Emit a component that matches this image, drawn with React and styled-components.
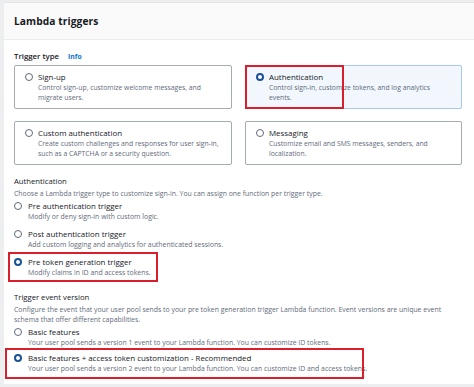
import React from 'react'
import styled, { createGlobalStyle } from 'styled-components'

const Global = createGlobalStyle`
  html, body { margin: 0; padding: 0; background: #eceeef; }
  body { font-family: "Open Sans", "Liberation Sans", sans-serif; color: #16191f; }
`

const Page = styled.div`
  width: 474px;
  height: 387px;
  padding: 2px 0 0 4px;
  box-sizing: border-box;
  overflow: hidden;
`

const Panel = styled.div`
  background: #fff;
  border-top: 1px solid #e3e5e7;
  height: 382px;
  box-sizing: border-box;
`

const Header = styled.div`
  height: 37px;
  display: flex;
  align-items: center;
  padding-left: 10px;
  background: #fafafa;
  border-bottom: 1px solid #eaeded;
  box-sizing: border-box;
`

const Title = styled.h2`
  margin: 0;
  font-size: 10.2px;
  font-weight: 700;
  letter-spacing: 0.1px;
`

const Body = styled.div`
  padding: 11px 12px 0 10px;
`

const FieldLabel = styled.div`
  display: flex;
  align-items: center;
  gap: 9px;
  font-size: 7.8px;
  font-weight: 600;
  line-height: 11px;
`

const Info = styled.span`
  color: #0972d3;
  font-weight: 700;
  font-size: 6.8px;
`

const Tiles = styled.div`
  display: grid;
  grid-template-columns: 218px 217px;
  column-gap: 13px;
  row-gap: 12px;
  margin-top: 2.5px;
`

const Tile = styled.div`
  position: relative;
  height: 44px;
  box-sizing: border-box;
  border: 1px solid ${p => (p.$selected ? '#a9c8e6' : '#a4abb3')};
  background: ${p => (p.$selected ? '#f1f7fd' : '#fff')};
  border-radius: 2px;
  padding: 6px 6px 0 10px;
  display: flex;
  gap: 5px;
`

const Radio = styled.span`
  flex: none;
  width: 8px;
  height: 8px;
  box-sizing: border-box;
  border-radius: 50%;
  margin-top: 1.5px;
  border: ${p => (p.$checked ? '2.3px solid #1a5296' : '1px solid #5f6b7a')};
  background: #fff;
`

const TextCol = styled.div`
  display: flex;
  flex-direction: column;
`

const TileText = styled(TextCol)`
  max-width: 182px;
`

const OptTitle = styled.div`
  font-size: 7.9px;
  font-weight: 500;
  line-height: 11px;
  white-space: nowrap;
`

const OptDesc = styled.div`
  font-size: ${p => (p.$nowrap ? 6.9 : 6.8)}px;
  line-height: 10px;
  color: #5f6b7a;
  white-space: ${p => (p.$nowrap ? 'nowrap' : 'normal')};
`

const SectionLabel = styled.div`
  font-size: 7.7px;
  line-height: 11px;
  margin-top: ${p => p.$top}px;
`

const SectionDesc = styled.div`
  font-size: 6.9px;
  line-height: 10px;
  color: #5f6b7a;
  margin-top: 2px;
  padding-right: 16px;
`

const Options = styled.div`
  display: flex;
  flex-direction: column;
  gap: ${p => p.$gap}px;
  margin-top: ${p => p.$top}px;
`

const Option = styled.div`
  position: relative;
  display: flex;
  gap: 6px;
`

const Mark = styled.span`
  position: absolute;
  border: 2px solid #d91f2c;
  box-sizing: border-box;
  pointer-events: none;
  left: ${p => p.$l}px;
  top: ${p => p.$t}px;
  width: ${p => p.$w}px;
  height: ${p => p.$h}px;
`

const RadioOption = ({ checked, title, desc, mark }) => (
  <Option>
    <Radio $checked={checked} />
    <TextCol>
      <OptTitle>{title}</OptTitle>
      <OptDesc $nowrap>{desc}</OptDesc>
    </TextCol>
    {mark && <Mark $l={mark[0]} $t={mark[1]} $w={mark[2]} $h={mark[3]} />}
  </Option>
)

const tiles = [
  { title: 'Sign-up', desc: 'Control sign-up, customize welcome messages, and migrate users.' },
  { title: 'Authentication', desc: 'Control sign-in, customize tokens, and log analytics events.', selected: true },
  { title: 'Custom authentication', desc: 'Create custom challenges and responses for user sign-in, such as a CAPTCHA or a security question.' },
  { title: 'Messaging', desc: 'Customize email and SMS messages, senders, and localization.' },
]

const App = () => {
  return (
    <Page>
      <Global />
      <Panel>
        <Header>
          <Title>Lambda triggers</Title>
        </Header>
        <Body>
          <FieldLabel>
            Trigger type <Info>Info</Info>
          </FieldLabel>
          <Tiles>
            {tiles.map(t => (
              <Tile key={t.title} $selected={t.selected}>
                <Radio $checked={t.selected} />
                <TileText>
                  <OptTitle>{t.title}</OptTitle>
                  <OptDesc>{t.desc}</OptDesc>
                </TileText>
                {t.selected && <Mark $l={-1} $t={-1} $w={99} $h={44} />}
              </Tile>
            ))}
          </Tiles>

          <SectionLabel $top={11}>Authentication</SectionLabel>
          <SectionDesc>
            Choose a Lambda trigger type to customize sign-in. You can assign one function per trigger type.
          </SectionDesc>
          <Options $gap={7} $top={2}>
            <RadioOption title="Pre authentication trigger" desc="Modify or deny sign-in with custom logic." />
            <RadioOption title="Post authentication trigger" desc="Add custom logging and analytics for authenticated sessions." />
            <RadioOption
              checked
              title="Pre token generation trigger"
              desc="Modify claims in ID and access tokens."
              mark={[-6, -5, 150, 30]}
            />
          </Options>

          <SectionLabel $top={14}>Trigger event version</SectionLabel>
          <SectionDesc>
            Configure the event that your user pool sends to your pre token generation trigger Lambda function. Event versions are unique event schema that offer different capabilities.
          </SectionDesc>
          <Options $gap={5} $top={2}>
            <RadioOption
              title="Basic features"
              desc="Your user pool sends a version 1 event to your Lambda function. You can customize ID tokens."
            />
            <RadioOption
              checked
              title="Basic features + access token customization - Recommended"
              desc="Your user pool sends a version 2 event to your Lambda function. You can customize ID and access tokens."
              mark={[-9, -5, 359, 31]}
            />
          </Options>
        </Body>
      </Panel>
    </Page>
  )
}

export default App
